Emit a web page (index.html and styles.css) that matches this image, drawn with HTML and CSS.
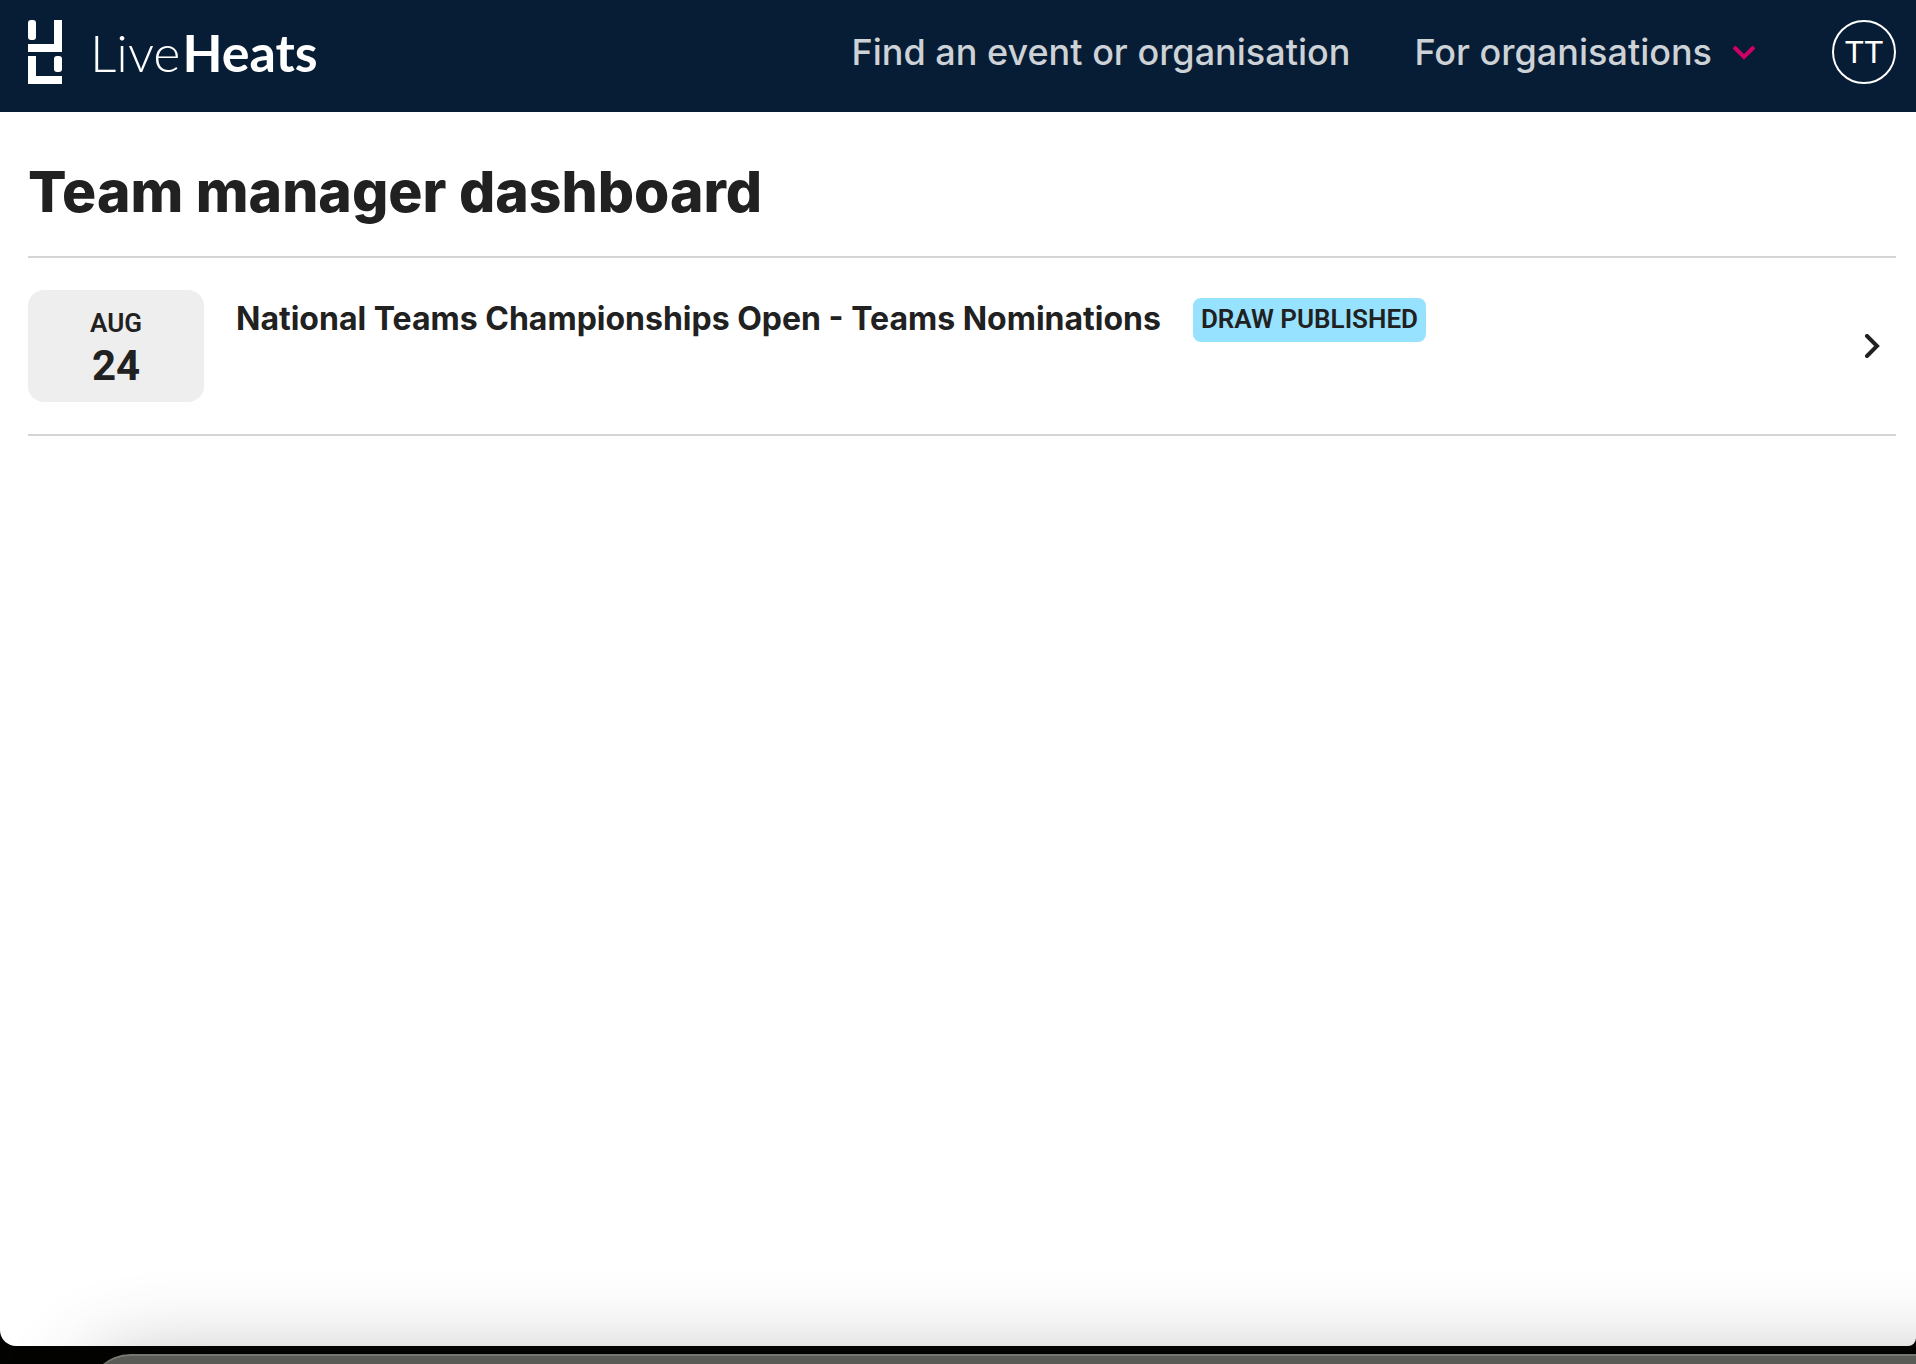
FILE: index.html
```
<!DOCTYPE html>
<html lang="en">
  <head>
    <meta charset="UTF-8" />
    <meta name="viewport" content="width=device-width, initial-scale=1.0" />
    <title>Team manager dashboard - LiveHeats</title>
    <link rel="stylesheet" href="styles.css">
  </head>
  <body>
    <div class="window">
      <header class="header">
        <a class="logo" href="#">
          <svg class="logo-mark" viewBox="0 0 34 64" fill="#fff" aria-hidden="true">
            <rect x="0" y="0" width="8" height="20" rx="3" />
            <path d="M26 0h8v32H0v-8h26z" />
            <path d="M0 36h8v20h26v8H0z" />
            <rect x="26" y="36" width="8" height="16" rx="3" />
          </svg>
          <span class="logo-text">Live<b>Heats</b></span>
        </a>
        <nav class="nav">
          <a class="nav-link" href="#">Find an event or organisation</a>
          <button class="nav-link nav-menu" type="button">
            For organisations
            <svg class="nav-arrow" viewBox="0 0 24 16" aria-hidden="true">
              <path d="M2 3l10 10L22 3" fill="none" stroke="#cf0063" stroke-width="4" />
            </svg>
          </button>
          <button class="avatar" type="button" aria-label="Account">TT</button>
        </nav>
      </header>
      <main class="content">
        <h1>Team manager dashboard</h1>
        <ul class="events">
          <li>
            <a class="event" href="#">
              <div class="date">
                <span class="month">AUG</span>
                <span class="day">24</span>
              </div>
              <div class="event-info">
                <h2>National Teams Championships Open - Teams Nominations</h2>
                <span class="status">DRAW PUBLISHED</span>
              </div>
              <svg class="event-arrow" viewBox="0 0 16 24" aria-hidden="true">
                <path d="M3 2l10 10L3 22" fill="none" stroke="#212121" stroke-width="4" stroke-linecap="round" />
              </svg>
            </a>
          </li>
        </ul>
      </main>
    </div>
    <div class="desktop">
      <div class="dock-area">
        <div class="dock"></div>
      </div>
    </div>
  </body>
</html>
```

FILE: styles.css
```
* {
  box-sizing: border-box;
}

body {
  display: flex;
  flex-direction: column;
  min-height: 100vh;
  margin: 0;
  background-color: #030402;
  color: #212121;
  font-family: Inter, "Liberation Sans", sans-serif;
}

a {
  color: inherit;
  text-decoration: none;
}

button {
  padding: 0;
  border: none;
  background: none;
  font-family: inherit;
  cursor: pointer;
}

.window {
  flex: 1;
  background-color: #fff;
  border-radius: 0 0 8px 16px;
}

/* Header */
.header {
  display: flex;
  justify-content: space-between;
  align-items: center;
  padding: 20px 20px 28px 28px;
  background-color: #071c35;
}

.logo {
  display: flex;
  align-items: center;
  gap: 28px;
  color: #fff;
}

.logo-mark {
  width: 34px;
  height: 64px;
}

.logo-text {
  font-family: Lato, sans-serif;
  font-size: 52px;
  font-weight: 300;
  line-height: 64px;
}

.logo-text b {
  margin-left: 2px;
  font-weight: 700;
}

.nav {
  display: flex;
  align-items: center;
  gap: 64px;
}

.nav-link {
  color: #cdd2d7;
  font-size: 36px;
  font-weight: 500;
  line-height: 48px;
}

.nav-menu {
  display: flex;
  align-items: center;
  gap: 20px;
  margin-right: 12px;
}

.nav-arrow {
  width: 24px;
  height: 16px;
}

.avatar {
  width: 64px;
  height: 64px;
  border: 2px solid #fff;
  border-radius: 50%;
  color: #fff;
  font-family: Roboto, sans-serif;
  font-size: 32px;
}

/* Dashboard */
.content {
  padding: 48px 20px 48px 28px;
}

h1 {
  margin: 0 0 32px;
  font-size: 57px;
  font-weight: 800;
  line-height: 64px;
}

.events {
  margin: 0;
  padding: 0;
  border-top: 2px solid #d5d5d5;
  list-style: none;
}

.event {
  display: flex;
  align-items: center;
  gap: 32px;
  padding: 32px 16px 32px 0;
  border-bottom: 2px solid #d5d5d5;
}

.date {
  display: flex;
  flex-direction: column;
  justify-content: center;
  width: 176px;
  height: 112px;
  border-radius: 16px;
  background-color: #eee;
  font-family: Roboto, sans-serif;
  font-weight: 700;
  text-align: center;
}

.month {
  font-size: 26px;
  font-weight: 600;
  line-height: 40px;
}

.day {
  font-size: 42px;
  line-height: 46px;
}

.event-info {
  display: flex;
  flex: 1;
  align-self: flex-start;
  gap: 32px;
  padding-top: 8px;
}

h2 {
  margin: 0;
  font-size: 32px;
  font-weight: 700;
  line-height: 42px;
}

.status {
  padding: 0 8px 2px;
  border-radius: 8px;
  background-color: #97e3ff;
  font-family: Roboto, sans-serif;
  font-size: 26px;
  font-weight: 600;
  line-height: 42px;
}

.event-arrow {
  width: 16px;
  height: 24px;
}

/* Desktop strip under the window */
.desktop {
  position: relative;
  height: 18px;
}

/* Lets the dock shadow fall over the window */
.dock-area {
  position: absolute;
  right: 0;
  bottom: 0;
  left: 0;
  height: 160px;
  overflow: hidden;
  pointer-events: none;
}

.dock {
  height: 160px;
  margin: 150px -120px 0 87px;
  border-top: 2px solid #777772;
  border-radius: 44px;
  background-color: #5a5a56;
  box-shadow: 0 10px 88px rgba(0, 0, 0, 0.3);
}
```
